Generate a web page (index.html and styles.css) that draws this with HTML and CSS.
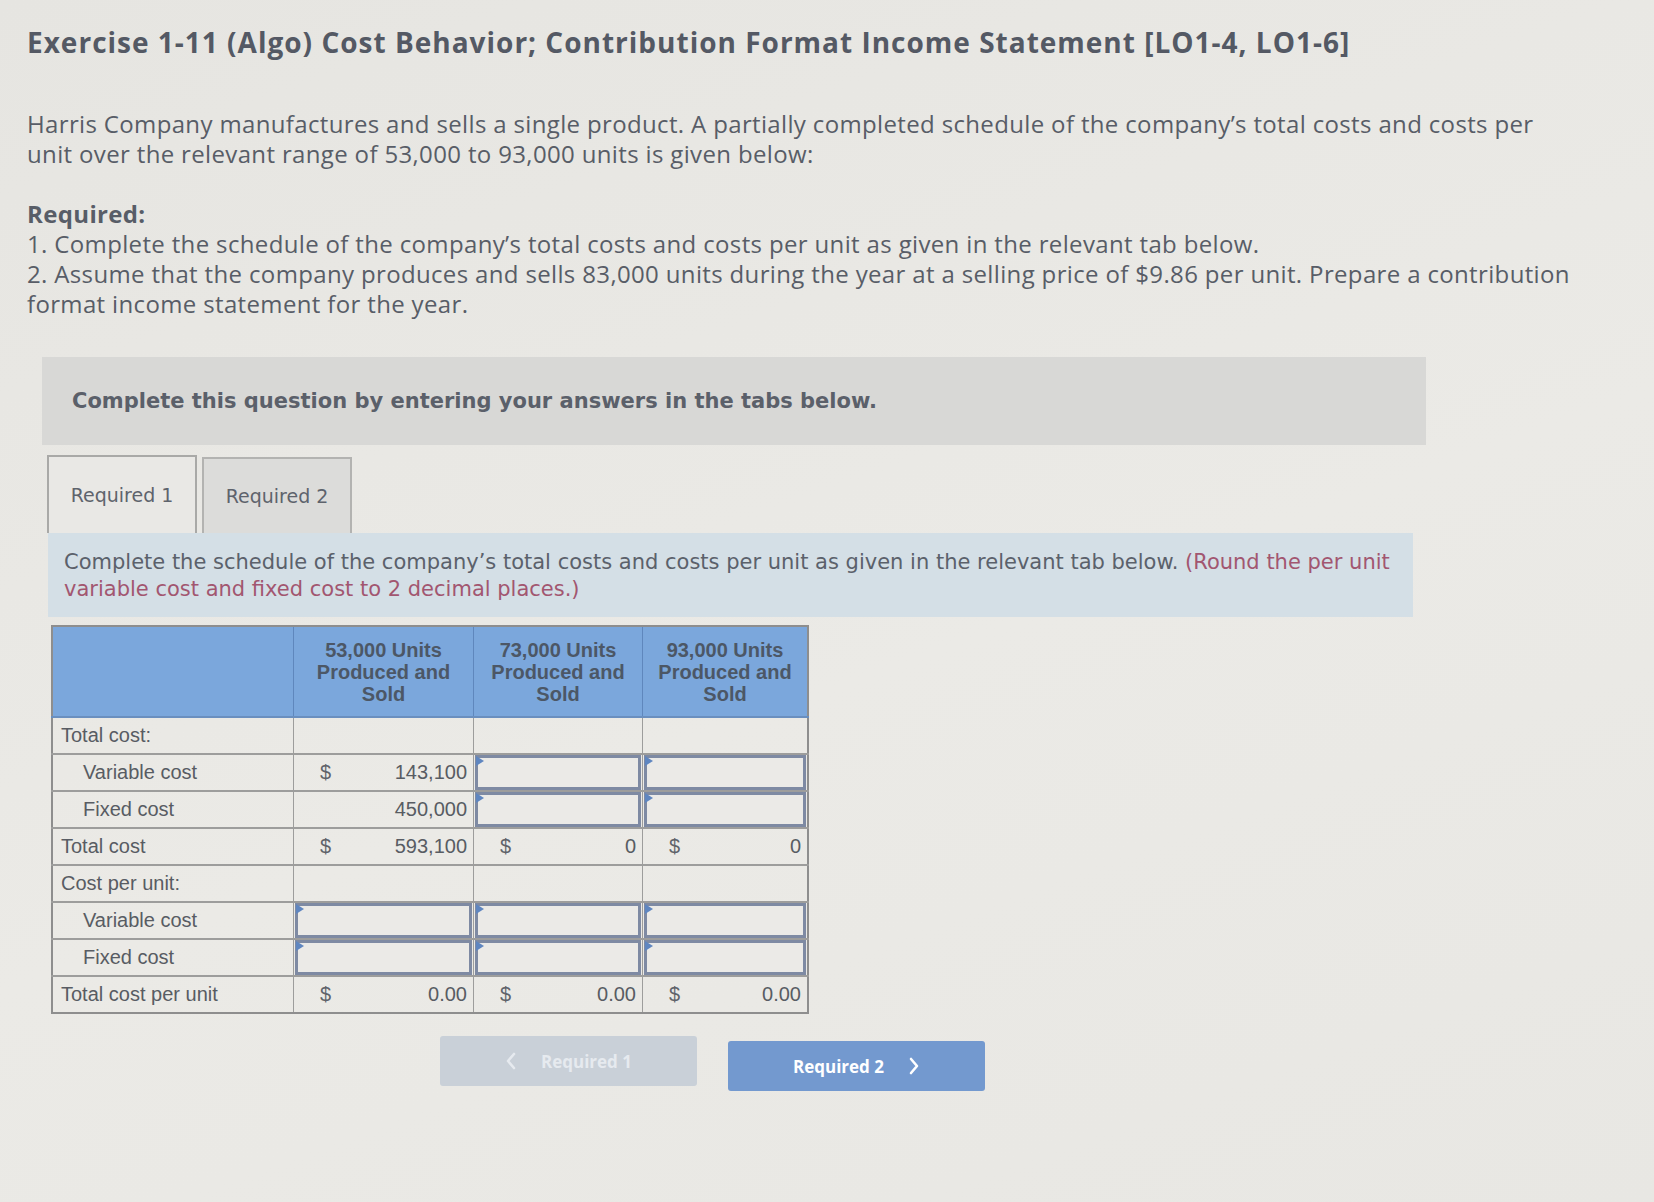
FILE: index.html
```html
<!DOCTYPE html>
<html lang="en">
<head>
<meta charset="utf-8">
<title>Exercise 1-11 (Algo)</title>
<link rel="stylesheet" href="styles.css">
</head>
<body>
<div class="page">
  <h1 class="title">Exercise 1-11 (Algo) Cost Behavior; Contribution Format Income Statement [LO1-4, LO1-6]</h1>
  <p class="intro">Harris Company manufactures and sells a single product. A partially completed schedule of the company’s total costs and costs per unit over the relevant range of 53,000 to 93,000 units is given below:</p>
  <div class="required">
    <div class="req-head">Required:</div>
    <div>1. Complete the schedule of the company’s total costs and costs per unit as given in the relevant tab below.</div>
    <div>2. Assume that the company produces and sells 83,000 units during the year at a selling price of $9.86 per unit. Prepare a contribution format income statement for the year.</div>
  </div>
</div>

<div class="notice">Complete this question by entering your answers in the tabs below.</div>

<div class="tabs">
  <div class="tab tab-active">Required 1</div>
  <div class="tab">Required 2</div>
</div>

<div class="panel">
  <div class="instruction">Complete the schedule of the company’s total costs and costs per unit as given in the relevant tab below. <span class="hint">(Round the per unit variable cost and fixed cost to 2 decimal places.)</span></div>

  <table class="sched">
    <thead>
      <tr>
        <th class="lab-h"></th>
        <th>53,000 Units Produced and Sold</th>
        <th>73,000 Units Produced and Sold</th>
        <th>93,000 Units Produced and Sold</th>
      </tr>
    </thead>
    <tbody>
      <tr>
        <td class="lab">Total cost:</td>
        <td></td><td></td><td></td>
      </tr>
      <tr>
        <td class="lab ind">Variable cost</td>
        <td><div class="val"><span class="cur">$</span><span>143,100</span></div></td>
        <td class="inp-cell"><div class="inp"></div></td>
        <td class="inp-cell"><div class="inp"></div></td>
      </tr>
      <tr>
        <td class="lab ind">Fixed cost</td>
        <td><div class="val"><span class="cur"></span><span>450,000</span></div></td>
        <td class="inp-cell"><div class="inp"></div></td>
        <td class="inp-cell"><div class="inp"></div></td>
      </tr>
      <tr>
        <td class="lab">Total cost</td>
        <td><div class="val"><span class="cur">$</span><span>593,100</span></div></td>
        <td><div class="val"><span class="cur">$</span><span>0</span></div></td>
        <td><div class="val"><span class="cur">$</span><span>0</span></div></td>
      </tr>
      <tr>
        <td class="lab">Cost per unit:</td>
        <td></td><td></td><td></td>
      </tr>
      <tr>
        <td class="lab ind">Variable cost</td>
        <td class="inp-cell"><div class="inp"></div></td>
        <td class="inp-cell"><div class="inp"></div></td>
        <td class="inp-cell"><div class="inp"></div></td>
      </tr>
      <tr>
        <td class="lab ind">Fixed cost</td>
        <td class="inp-cell"><div class="inp"></div></td>
        <td class="inp-cell"><div class="inp"></div></td>
        <td class="inp-cell"><div class="inp"></div></td>
      </tr>
      <tr>
        <td class="lab">Total cost per unit</td>
        <td><div class="val"><span class="cur">$</span><span>0.00</span></div></td>
        <td><div class="val"><span class="cur">$</span><span>0.00</span></div></td>
        <td><div class="val"><span class="cur">$</span><span>0.00</span></div></td>
      </tr>
    </tbody>
  </table>

  <div class="nav">
    <button class="btn btn-prev" type="button">
      <svg class="chev" width="12" height="18" viewBox="0 0 12 18"><polyline points="9,2 3,9 9,16" fill="none" stroke="currentColor" stroke-width="2.6" stroke-linecap="round" stroke-linejoin="round"/></svg>
      <span>Required 1</span>
    </button>
    <button class="btn btn-next" type="button">
      <span>Required 2</span>
      <svg class="chev" width="12" height="18" viewBox="0 0 12 18"><polyline points="3,2 9,9 3,16" fill="none" stroke="currentColor" stroke-width="2.6" stroke-linecap="round" stroke-linejoin="round"/></svg>
    </button>
  </div>
</div>
</body>
</html>
```

FILE: styles.css
```css
html, body {
  margin: 0;
  padding: 0;
}

body {
  width: 1654px;
  min-height: 1202px;
  background: linear-gradient(160deg, #e6e5e1 0%, #ebeae6 55%, #e8e7e3 100%);
  color: #585d67;
  font-family: "Open Sans", Lato, Arial, sans-serif;
  overflow: hidden;
}

.page {
  padding: 23px 0 0 27px;
}

.title {
  margin: 0;
  font-size: 28px;
  line-height: 38px;
  font-weight: 700;
  color: #545964;
  letter-spacing: 1px;
}

.intro {
  margin: 48px 0 0 0;
  width: 1520px;
  font-size: 24px;
  line-height: 30px;
  letter-spacing: 0.35px;
}

.required {
  margin-top: 30px;
  width: 1560px;
  font-size: 24px;
  line-height: 30px;
  letter-spacing: 0.35px;
}

.req-head {
  font-weight: 700;
}

.notice {
  margin: 38px 0 0 42px;
  width: 1354px;
  height: 88px;
  padding-left: 30px;
  display: flex;
  align-items: center;
  background: #d8d8d6;
  font-family: "DejaVu Sans", Verdana, sans-serif;
  font-weight: 700;
  font-size: 21px;
  color: #5b606a;
}

.tabs {
  display: flex;
  gap: 5px;
  margin: 10px 0 0 47px;
  height: 78px;
  align-items: flex-end;
}

.tab {
  width: 146px;
  height: 74px;
  display: flex;
  align-items: center;
  justify-content: center;
  border: 2px solid #b3b3b1;
  border-bottom: none;
  background: #dcdcda;
  font-family: "DejaVu Sans", Verdana, sans-serif;
  font-size: 19px;
  color: #5e636c;
}

.tab-active {
  height: 76px;
  background: #e9e8e5;
  border-color: #a9a9a7;
}

.panel {
  margin-left: 48px;
  width: 1365px;
}

.instruction {
  height: 84px;
  box-sizing: border-box;
  padding: 16px 20px 0 16px;
  background: #d4dfe6;
  font-family: "DejaVu Sans", Verdana, sans-serif;
  font-size: 21px;
  line-height: 27px;
  color: #5b616b;
}

.hint {
  color: #a25670;
}

.sched {
  margin: 8px 0 0 3px;
  border-collapse: collapse;
  font-family: "Liberation Sans", Arial, sans-serif;
  font-size: 20px;
  color: #585c63;
  border: 2px solid #8e8e8e;
}

.sched th {
  height: 89px;
  padding: 0 6px;
  background: #7ba7dc;
  color: #4c5766;
  font-weight: 700;
  font-size: 20px;
  line-height: 22px;
  text-align: center;
  border-left: 1px solid #5f87bd;
  border-bottom: 2px solid #6a8fbf;
  vertical-align: middle;
}

.sched th:nth-child(1) { width: 228px; border-left: none; }
.sched th:nth-child(2) { width: 167px; }
.sched th:nth-child(3) { width: 156px; }
.sched th:nth-child(4) { width: 152px; }

.sched td {
  height: 35px;
  padding: 0;
  border: 1px solid #9d9d9c;
  border-top-width: 2px;
  vertical-align: middle;
}

.sched td.lab {
  padding-left: 8px;
  text-align: left;
  white-space: nowrap;
}

.sched td.ind {
  padding-left: 30px;
}

.val {
  display: flex;
  justify-content: space-between;
  padding: 0 6px 0 26px;
}

.cur {
  color: #5f636a;
}

.inp-cell {
  position: relative;
}

.inp {
  height: 29px;
  margin: 0 1px;
  border: 3px solid #7e8aa3;
  background: #ebeae7;
  position: relative;
}

.inp::before {
  content: "";
  position: absolute;
  left: -2px;
  top: -2px;
  width: 0;
  height: 0;
  border-top: 5px solid transparent;
  border-bottom: 5px solid transparent;
  border-left: 8px solid #5f86c0;
}

.nav {
  display: flex;
  justify-content: center;
  gap: 31px;
  margin-top: 22px;
  padding-right: 36px;
}

.btn {
  width: 257px;
  height: 50px;
  border: none;
  border-radius: 3px;
  display: flex;
  align-items: center;
  justify-content: center;
  gap: 24px;
  font-family: "Open Sans", Lato, Arial, sans-serif;
  font-weight: 700;
  font-size: 17px;
  cursor: pointer;
}

.btn-prev {
  background: #c9d0d8;
  color: #e6eaef;
}

.btn-next {
  background: #7399cf;
  color: #ffffff;
  margin-top: 5px;
}

.chev {
  display: block;
}
```
